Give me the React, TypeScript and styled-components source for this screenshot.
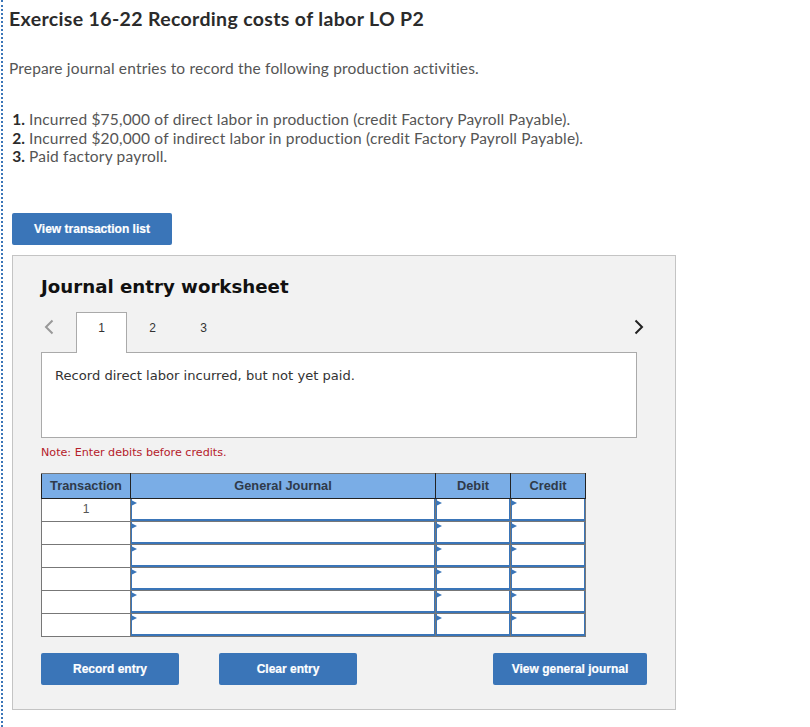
import styled, { createGlobalStyle } from "styled-components";

const GlobalStyle = createGlobalStyle`
  html, body {
    margin: 0;
    padding: 0;
    background: #fff;
  }
`;

const Page = styled.div`
  width: 810px;
  height: 727px;
  overflow: hidden;
  box-sizing: border-box;
  border-left: 2px dotted #3a75b8;
  margin-left: 1px;
  padding: 0 0 0 6px;
  font-family: Lato, "Liberation Sans", sans-serif;
`;

const Title = styled.h1`
  margin: 0;
  padding-top: 7px;
  height: 23px;
  line-height: 24px;
  font-size: 19.5px;
  font-weight: 700;
  color: #2b2b2b;
  letter-spacing: 0.35px;
`;

const Intro = styled.p`
  margin: 28px 0 0;
  line-height: 20px;
  font-size: 15.5px;
  color: #555;
  letter-spacing: 0.16px;
`;

const Steps = styled.ol`
  list-style: none;
  margin: 32px 0 0;
  padding: 0 0 0 3px;
`;

const Step = styled.li`
  display: flex;
  line-height: 18.5px;
  font-size: 15.5px;
  color: #555;
  letter-spacing: 0.19px;
  white-space: nowrap;
`;

const StepNumber = styled.b`
  width: 13px;
  margin-right: 4px;
  text-align: right;
  color: #2b2b2b;
  letter-spacing: 0;
`;

const Button = styled.button<{ $width: number }>`
  width: ${(p) => p.$width}px;
  height: 32px;
  padding: 0;
  border: 0;
  border-radius: 2px;
  background: #3a75b8;
  color: #fff;
  font-family: "Liberation Sans", Arial, sans-serif;
  font-size: 12px;
  font-weight: 700;
  -webkit-text-stroke: 0.2px #fff;
`;

const TopAction = styled.div`
  margin: 47px 0 10px 3px;
  height: 32px;
`;

const Panel = styled.section`
  width: 664px;
  height: 455px;
  margin-left: 3px;
  box-sizing: border-box;
  border: 1px solid #c4c4c4;
  background: #f2f2f2;
  padding: 17px 28px 0;
`;

const PanelTitle = styled.h2`
  margin: 0;
  height: 28px;
  line-height: 28px;
  font-family: "DejaVu Sans", Verdana, sans-serif;
  font-size: 18.2px;
  font-weight: 700;
  color: #111;
`;

const TabBar = styled.div`
  display: flex;
  align-items: flex-start;
  height: 40px;
  margin-top: 11px;
  position: relative;
  z-index: 1;
`;

const Arrow = styled.svg`
  display: block;
  flex: none;
`;

const PrevSlot = styled.div`
  width: 35px;
  padding: 7px 0 0 3px;
  box-sizing: border-box;
`;

const NextSlot = styled.div`
  margin-left: auto;
  padding: 7px 0 0 0;
  width: 8px;
  margin-right: 5px;
`;

const Tab = styled.div<{ $active?: boolean }>`
  width: 51px;
  height: ${(p) => (p.$active ? 41 : 40)}px;
  box-sizing: border-box;
  border: 1px solid ${(p) => (p.$active ? "#aaa" : "transparent")};
  border-bottom: 0;
  background: ${(p) => (p.$active ? "#fff" : "transparent")};
  text-align: center;
  line-height: 30px;
  font-family: "Liberation Sans", Arial, sans-serif;
  font-size: 12px;
  color: #333;
`;

const Description = styled.div`
  width: 596px;
  height: 86px;
  box-sizing: border-box;
  border: 1px solid #aaa;
  background: #fff;
  padding: 14px 13px 0;
  line-height: 18px;
  font-family: "DejaVu Sans", Verdana, sans-serif;
  font-size: 13.1px;
  color: #333;
`;

const Note = styled.div`
  margin-top: 7px;
  height: 16px;
  line-height: 16px;
  font-family: "DejaVu Sans", Verdana, sans-serif;
  font-size: 11.15px;
  color: #b5202a;
`;

const Journal = styled.table`
  margin-top: 12px;
  width: 544px;
  height: 164px;
  table-layout: fixed;
  border-collapse: collapse;
  border: 1px solid #777;
  font-family: "Liberation Sans", Arial, sans-serif;
`;

const HeadCell = styled.th`
  height: 24px;
  padding: 0;
  background: #7aade6;
  border: 1px solid #777;
  border-left-color: #222;
  border-right-color: #222;
  border-bottom: 1px solid #222;
  font-size: 12.8px;
  font-weight: 700;
  color: #2f3a4a;
  text-align: center;
`;

const RowCell = styled.td`
  height: 22px;
  padding: 0;
  background: #fff;
  border: 1px solid #777;
  text-align: center;
  vertical-align: top;
  font-size: 12px;
  line-height: 20px;
  color: #555;
`;

const EntryCell = styled.td`
  height: 22px;
  padding: 0;
  border: 1px solid #777;
  background: #fff;
  vertical-align: top;
`;

const EntryBox = styled.div`
  position: relative;
  height: 22px;
  box-sizing: border-box;
  border-style: solid;
  border-color: #3a75b8;
  border-width: 0 1px 2px 1px;
  background: #fff;

  &::before {
    content: "";
    position: absolute;
    top: 1px;
    left: -1px;
    border-style: solid;
    border-width: 3.5px 0 3.5px 6px;
    border-color: transparent transparent transparent #3a75b8;
  }
`;

const Actions = styled.div`
  display: flex;
  margin-top: 16px;
  width: 606px;
`;

const LastAction = styled.div`
  margin-left: auto;
`;

const MiddleAction = styled.div`
  margin-left: 40px;
`;

const rows = ["1", "", "", "", "", ""];

export default function App() {
  return (
    <>
      <GlobalStyle />
      <Page>
        <Title>Exercise 16-22 Recording costs of labor LO P2</Title>
        <Intro>Prepare journal entries to record the following production activities.</Intro>
        <Steps>
          <Step>
            <StepNumber>1.</StepNumber>
            Incurred $75,000 of direct labor in production (credit Factory Payroll Payable).
          </Step>
          <Step>
            <StepNumber>2.</StepNumber>
            Incurred $20,000 of indirect labor in production (credit Factory Payroll Payable).
          </Step>
          <Step>
            <StepNumber>3.</StepNumber>
            Paid factory payroll.
          </Step>
        </Steps>
        <TopAction>
          <Button $width={160}>View transaction list</Button>
        </TopAction>
        <Panel>
          <PanelTitle>Journal entry worksheet</PanelTitle>
          <TabBar>
            <PrevSlot>
              <Arrow width="10" height="16" viewBox="0 0 10 16">
                <path d="M8.5 1.5 2 8l6.5 6.5" fill="none" stroke="#999" strokeWidth="2" />
              </Arrow>
            </PrevSlot>
            <Tab $active>1</Tab>
            <Tab>2</Tab>
            <Tab>3</Tab>
            <NextSlot>
              <Arrow width="10" height="16" viewBox="0 0 10 16">
                <path d="M1.5 1.5 8 8l-6.5 6.5" fill="none" stroke="#222" strokeWidth="2" />
              </Arrow>
            </NextSlot>
          </TabBar>
          <Description>Record direct labor incurred, but not yet paid.</Description>
          <Note>Note: Enter debits before credits.</Note>
          <Journal>
            <colgroup>
              <col width="89" />
              <col width="305" />
              <col width="75" />
              <col width="75" />
            </colgroup>
            <thead>
              <tr>
                <HeadCell>Transaction</HeadCell>
                <HeadCell>General Journal</HeadCell>
                <HeadCell>Debit</HeadCell>
                <HeadCell>Credit</HeadCell>
              </tr>
            </thead>
            <tbody>
              {rows.map((label, i) => (
                <tr key={i}>
                  <RowCell>{label}</RowCell>
                  <EntryCell>
                    <EntryBox />
                  </EntryCell>
                  <EntryCell>
                    <EntryBox />
                  </EntryCell>
                  <EntryCell>
                    <EntryBox />
                  </EntryCell>
                </tr>
              ))}
            </tbody>
          </Journal>
          <Actions>
            <Button $width={138}>Record entry</Button>
            <MiddleAction>
              <Button $width={138}>Clear entry</Button>
            </MiddleAction>
            <LastAction>
              <Button $width={154}>View general journal</Button>
            </LastAction>
          </Actions>
        </Panel>
      </Page>
    </>
  );
}
